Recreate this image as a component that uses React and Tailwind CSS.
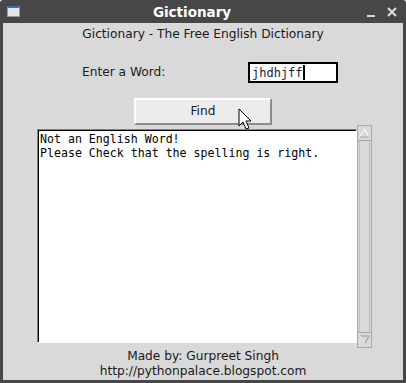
import React from 'react';

const SANS = { fontFamily: '"DejaVu Sans", "Liberation Sans", sans-serif' };

function Cursor() {
  return (
    <svg width="16" height="24" viewBox="0 0 16 24" className="absolute left-[102px] top-[8px]">
      <path d="M1 1 L1 18 L5 14 L8 21 L11 20 L8 13 L13 13 Z" fill="#fff" stroke="#000" strokeWidth="1" strokeLinejoin="round" />
    </svg>
  );
}

export default function App() {
  return (
    <div className="w-[406px] h-[383px] bg-[#474747] flex flex-col rounded-t-[3px] overflow-hidden" style={SANS}>
      {/* title bar */}
      <div className="h-[23px] flex items-center px-[7px]">
        <div className="w-[13px] h-[11px] bg-[#e6e6e6] border border-[#9a9a9a] border-t-2 border-t-[#3b6fc4]" />
        <div className="flex-1 text-center text-white font-bold text-[13.5px] pt-[1px] pr-[3px]">Gictionary</div>
        <div className="flex items-center gap-[12px] mr-[2px]">
          <div className="w-[8px] h-[2px] bg-[#d8d8d8] mt-[8px]" />
          <svg width="10" height="10" viewBox="0 0 10 10">
            <path d="M1 1 L9 9 M9 1 L1 9" stroke="#d8d8d8" strokeWidth="2.2" />
          </svg>
        </div>
      </div>

      {/* client area */}
      <div className="flex-1 mx-[3px] mb-[3px] bg-[#d9d9d9] flex flex-col text-[12.2px] text-[#1a1a1a]">
        <div className="text-center mt-[3px] leading-[17px]">Gictionary - The Free English Dictionary</div>

        <div className="flex items-center mt-[19px] h-[21px]">
          <div className="ml-[79px] w-[166px]">Enter a Word:</div>
          <div className="w-[90px] h-[21px] bg-white border-2 border-black flex items-center pl-[2px] text-[12px] text-[#000]" style={{ fontFamily: '"DejaVu Sans Mono", monospace' }}>
            <span className="text-[#1a1a40]">jhdhjff</span>
            <span className="w-[2px] h-[15px] bg-black" />
          </div>
        </div>

        <div className="flex mt-[15px] relative">
          <div className="ml-[131px] w-[138px] h-[27px] bg-[#ececec] border-t-2 border-l-2 border-white border-b-2 border-r-2 border-b-[#8c8c8c] border-r-[#8c8c8c] flex items-center justify-center relative">
            Find
            <Cursor />
          </div>
        </div>

        <div className="flex items-start ml-[34px]">
          <div className="w-[320px] h-[214px] mt-[4px] bg-white border-t border-l border-[#808080] border-b border-r border-b-white border-r-white" >
            <div className="w-full h-full border-t border-l border-black px-[1px] pt-[1px] text-[11.6px] leading-[14px] text-black whitespace-pre" style={{ fontFamily: '"DejaVu Sans Mono", monospace' }}>
              {'Not an English Word!\nPlease Check that the spelling is right.'}
            </div>
          </div>
          <div className="w-[15px] h-[223px] border border-[#a8a8a8] bg-[#d9d9d9] flex flex-col">
            <div className="h-[15px] border-b border-[#a8a8a8] flex items-center justify-center">
              <svg width="11" height="10" viewBox="0 0 11 10"><path d="M5.5 1 L10 9 L1 9 Z" fill="#d9d9d9" stroke="#fff" strokeWidth="1" /><path d="M1 9 L10 9" stroke="#999" /></svg>
            </div>
            <div className="flex-1 border-l border-r border-[#bdbdbd] mx-[1px]" />
            <div className="h-[15px] border-t border-[#a8a8a8] flex items-center justify-center">
              <svg width="11" height="10" viewBox="0 0 11 10"><path d="M1 1 L10 1 L5.5 9 Z" fill="#d9d9d9" stroke="#999" strokeWidth="1" /><path d="M1 1 L5.5 9" stroke="#fff" /></svg>
            </div>
          </div>
        </div>

        <div className="text-center leading-[15px] mt-[1px]">Made by: Gurpreet Singh</div>
        <div className="text-center leading-[15px]">http://pythonpalace.blogspot.com</div>
      </div>
    </div>
  );
}
